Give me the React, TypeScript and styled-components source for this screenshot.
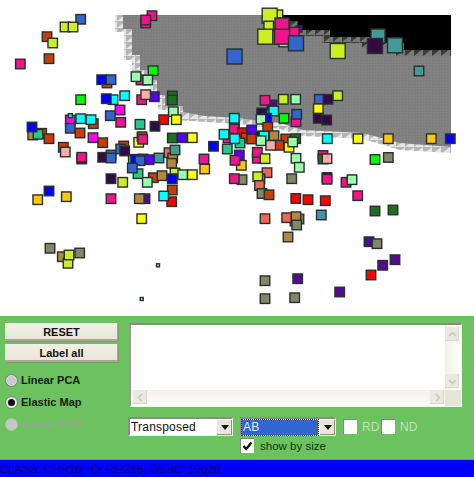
import React from "react";
import styled, { createGlobalStyle } from "styled-components";

const PINK = "#f0148c", BRICK = "#c83c0a", LIME = "#ccee22", STEEL = "#3366cc", BLUE = "#0000ff";
const CYAN = "#00ffff", GREEN = "#00ff00", YELLOW = "#ffff00", AMBER = "#ffc60a", MINT = "#99ffaa";
const JADE = "#22cc88", FOREST = "#1a7020", VIOLET = "#5500ff", PLUM = "#330a44", RED = "#ff0000";
const MAGENTA = "#ff00ee", SALMON = "#ee6655", ROSE = "#ffaaaa", TAN = "#b08840", TEAL = "#449999";
const SKY = "#4a90a8", OLIVE = "#808868", PURPLE = "#550a90";

// x, y (centre), colour, size -- in paint order
const squares: [number, number, string, number?][] = [
  [80.7, 19.3, STEEL], [65, 27, LIME], [73, 27, LIME], [47, 36.7, BRICK], [52.7, 43, LIME],
  [49, 58.7, BRICK], [20.3, 64, PINK], [152, 15.7, PINK], [145.7, 23, PINK], [145.7, 20, PINK],
  [141, 80, PINK], [136, 76.7, MINT], [153, 70.7, GREEN], [147.7, 80, MINT],
  [107, 83, BRICK], [101.7, 79.7, BLUE], [111, 79.7, STEEL], [80.7, 99.7, GREEN],
  [113, 99.7, CYAN], [106.3, 98.7, BLUE], [124.7, 95.7, CYAN], [154.3, 96.7, VIOLET], [141.7, 99.7, PINK], [145.7, 94.7, ROSE],
  [172.3, 96, FOREST], [172.3, 100, FOREST], [173.3, 111.7, MINT], [176.3, 119.7, YELLOW], [163.7, 119.7, RED],
  [155, 126.3, PLUM], [140, 124.3, JADE], [120, 110, MAGENTA], [110.3, 115.7, STEEL], [120.7, 122.3, PINK],
  [70.3, 120, MAGENTA], [70.3, 115.7, CYAN, 4], [93.3, 123.7, BRICK], [80.7, 118.7, CYAN], [91, 119.7, CYAN],
  [70.3, 128.3, STEEL], [80, 133, BRICK], [93, 137.7, MAGENTA], [102.7, 142.7, BRICK],
  [32.7, 135, TAN], [41.7, 133.3, BRICK], [38, 134.3, JADE], [32, 127, BLUE], [49, 138.7, BRICK],
  [63.3, 147.3, BRICK], [65.3, 152, ROSE], [81.7, 159, PLUM], [81.7, 157.3, PINK],
  [102.7, 157.3, PLUM], [111, 155, STEEL], [111, 158, STEEL], [123.7, 146, BRICK], [120.7, 149, STEEL], [124.7, 151, PLUM],
  [138.7, 142.3, YELLOW], [142, 136.7, BRICK], [142.7, 139.3, PINK],
  [172.3, 138, FOREST], [182.3, 137.7, VIOLET], [192.3, 137.7, YELLOW], [213.5, 146.3, BLUE],
  [204, 159, PINK], [204.7, 169, AMBER],
  [133.3, 160, JADE], [135.7, 159.3, BLUE], [143, 159, PINK], [149, 159.7, VIOLET], [140, 160.7, STEEL], [159, 158, TEAL],
  [169, 152.7, SALMON], [172.7, 158, TAN], [175, 150, TEAL], [171.7, 163.3, TAN],
  [138, 173.7, JADE], [132.3, 168, STEEL], [153.3, 177.7, BRICK], [162, 175.7, TAN], [175, 173, LIME],
  [182.7, 174.7, MINT], [192.3, 174.7, YELLOW], [172.3, 178.7, BLUE], [147.3, 182.3, MINT], [122.7, 182.3, LIME],
  [111, 178.7, PLUM], [172.3, 190, BRICK], [171.7, 201.7, RED], [163.7, 196, CYAN],
  [145, 198.7, PURPLE], [139.3, 198.7, TAN], [49, 191, BLUE], [37.7, 199.7, AMBER], [66.3, 196.7, AMBER],
  [111, 198.7, PINK], [141.7, 218.7, YELLOW],
  [50, 248.3, OLIVE], [62.3, 256.7, TAN], [79.7, 253, OLIVE], [68, 263.3, LIME], [69, 255, LIME],
  [158, 265.3, MINT, 3], [141.7, 299, MINT, 3],
  [272, 105, PURPLE], [261.7, 113, PLUM], [265, 100.3, PINK], [283.3, 99.3, LIME], [295.7, 99.3, MINT],
  [337.7, 95.7, LIME], [319.3, 99.3, STEEL], [328, 99.3, PLUM], [273.7, 111, CYAN], [266.7, 118.3, BLUE], [261, 119.3, MINT],
  [284, 118.3, GREEN], [296, 121.7, PINK], [296.7, 114.3, STEEL], [318.3, 108.7, YELLOW], [318.3, 118.3, PLUM], [326.7, 120, PLUM],
  [234.3, 126, PINK], [234.3, 129, PINK], [234.3, 118.3, CYAN], [228, 138, PINK], [224, 134.3, CYAN],
  [242.3, 132.7, RED], [267.7, 127.3, BRICK], [258, 136, PLUM], [251.7, 130, VIOLET], [246, 138, BRICK], [251.7, 139, BRICK],
  [264, 136, CYAN], [274, 135.7, TAN], [240, 143, JADE], [234.7, 138.7, CYAN], [227.3, 149, JADE], [285.7, 139, BRICK], [295.7, 138.7, FOREST],
  [279, 145.3, BRICK], [289, 147.3, YELLOW], [292.7, 142, MINT], [261, 140.7, MINT], [270.7, 145.3, ROSE],
  [327.3, 138.7, CYAN], [358, 138.7, YELLOW], [388.3, 138.7, AMBER], [431.3, 138.7, AMBER], [450.3, 138.7, BLUE],
  [239.3, 155, VIOLET], [241.3, 165.3, AMBER], [235, 160.3, PINK], [257.3, 158.3, PINK], [257.3, 152.3, PINK], [265, 158.7, LIME],
  [296, 158.3, MINT], [299.3, 167.3, MINT], [323, 155.5, PINK], [323, 159, FOREST], [327, 158.7, ROSE], [375, 159.5, GREEN], [388.3, 157.5, OLIVE],
  [267, 172.7, SALMON], [260, 179, OLIVE], [257.7, 176.7, LIME], [291.7, 178.7, OLIVE], [242, 179.7, OLIVE], [234.3, 178.7, PINK],
  [327, 177.5, PLUM], [327, 179.3, PINK], [346, 182.3, PINK], [352, 179.7, MINT], [357.7, 195.7, PINK],
  [259.5, 185.5, SALMON], [262, 193.5, OLIVE], [269, 194.8, BRICK], [295.8, 198.5, RED], [308, 199.7, RED], [325.3, 200.7, RED],
  [265, 218.7, SALMON], [295, 221, OLIVE], [299, 219, OLIVE], [286.7, 217.7, SALMON], [296, 216.7, TAN], [296.7, 225, OLIVE], [321.3, 215, SKY],
  [288, 237, TAN], [375, 211, FOREST], [393, 210, FOREST], [369, 241.7, PURPLE], [377, 243.7, OLIVE],
  [395, 259.7, PURPLE], [382.7, 265.3, PURPLE], [371, 275, RED], [265, 280.7, OLIVE], [297.7, 278.7, PURPLE],
  [339.7, 292, PURPLE], [265, 298.7, OLIVE], [294.7, 297.7, OLIVE],
  [278.7, 14, LIME, 8], [269.7, 15.7, LIME, 15], [268.7, 26, LIME], [282, 25, PINK, 14], [299, 29, PURPLE, 6], [294.3, 32, PINK],
  [283.7, 42, LIME], [265.3, 36.7, LIME, 15], [282, 36.7, PINK, 15], [296, 43.3, STEEL, 15],
  [337.7, 51, LIME, 15], [378, 36, TEAL, 14], [375, 46, PLUM, 15], [395, 45.3, TEAL, 15], [419, 71, TEAL], [234.5, 56.5, STEEL, 15],
];

const MAP_EDGE = "123,15 123,29 132,29 132,55 140,55 140,70 150,70 150,80 157,80 157,95 165,95 165,106 183,106 183,112 205,116 237,118 280,123 303,130 363,133 400,143 451,147 451,15";
const MAP_HALO = "115,15 115,32 124,32 124,60 132,60 132,76 143,76 143,86 150,86 150,100 158,100 158,110 175,110 175,120 237,124 280,129 303,136 363,139 400,150 451,153 451,15";
const DARK_EDGE = "283,15 283,21 298,21 298,30 330,30 330,37 370,37 370,43 404,43 404,50 451,50 451,15";
const DARK_HALO = "275,15 275,27 290,27 290,36 322,36 322,43 362,43 362,49 396,49 396,56 451,56 451,15";

const GlobalStyle = createGlobalStyle`
  html, body { margin: 0; padding: 0; background: #fff; }
`;

const Page = styled.div`
  width: 474px;
  height: 477px;
  display: flex;
  flex-direction: column;
  overflow: hidden;
  font-family: "Liberation Sans", Arial, sans-serif;
`;

const Plot = styled.svg`
  display: block;
  flex: 0 0 316px;
  width: 474px;
  height: 316px;
`;

const Panel = styled.div`
  flex: 1;
  background: #6cc25e;
  display: grid;
  grid-template-columns: 113px 333px;
  column-gap: 11px;
  padding: 7px 0 0 5px;
  align-items: start;
`;

const LeftColumn = styled.div`
  display: flex;
  flex-direction: column;
`;

const PushButton = styled.button`
  height: 18px;
  margin: 0 0 3px;
  padding: 0;
  border: 0;
  background: linear-gradient(#f2f0e6, #e8e5d6);
  box-shadow: inset -1px -2px 0 #a9a794, 1px 1px 0 #7f9a78;
  color: #111;
  font: bold 11px "Liberation Sans", Arial, sans-serif;
`;

const RadioGroup = styled.div`
  display: flex;
  flex-direction: column;
  gap: 8px;
  margin-top: 8px;
`;

const RadioRow = styled.div<{ $off?: boolean }>`
  display: flex;
  align-items: center;
  gap: 4px;
  height: 14px;
  margin-left: 1px;
  font-size: 11px;
  font-weight: bold;
  color: ${(p) => (p.$off ? "#93a890" : "#0c1f10")};
`;

const RadioDot = styled.span<{ $on?: boolean; $off?: boolean }>`
  width: 11px;
  height: 11px;
  border-radius: 50%;
  box-sizing: border-box;
  flex: none;
  background: ${(p) => (p.$on ? "#111" : p.$off ? "#c5c8c2" : "#c9c9cf")};
  border: ${(p) => (p.$on ? "2.5px solid #e6e6ea" : p.$off ? "0" : "1px solid #ddd")};
  box-shadow: 0 0 0 1px ${(p) => (p.$off ? "#a6c8a0" : "#7b8a7a")};
`;

const RightColumn = styled.div`
  display: flex;
  flex-direction: column;
  gap: 10px;
`;

const ListBox = styled.div`
  height: 84px;
  box-sizing: border-box;
  display: grid;
  grid-template-columns: 1fr 16px;
  grid-template-rows: 1fr 16px;
  background: #fff;
  border-top: 2px solid #8a8a86;
  border-left: 2px solid #9a9a96;
  border-right: 1px solid #f4f4ef;
  border-bottom: 1px solid #f4f4ef;
`;

const ListText = styled.div`
  background: #fff;
`;

const ScrollTrack = styled.div<{ $vertical?: boolean }>`
  display: flex;
  flex-direction: ${(p) => (p.$vertical ? "column" : "row")};
  justify-content: space-between;
  padding: ${(p) => (p.$vertical ? "2px 1px 2px 0" : "0 1px 1px 2px")};
  background: ${(p) =>
    p.$vertical ? "linear-gradient(90deg, #f2f1e9, #fdfdfa)" : "linear-gradient(#f2f1e9, #fdfdfa)"};
`;

const ScrollButton = styled.div`
  width: 14px;
  height: 14px;
  display: flex;
  align-items: center;
  justify-content: center;
  background: #eae9e0;
  box-shadow: inset -1px -1px 0 #d8d7cc;
`;

const ScrollCorner = styled.div`
  background: #e6e5d8;
`;

const Controls = styled.div`
  display: grid;
  grid-template-columns: 105px auto;
  column-gap: 7px;
  row-gap: 2px;
  margin-left: -1px;
`;

const OptionsRow = styled.div`
  display: flex;
  align-items: center;
`;

const Select = styled.div<{ $width: number }>`
  width: ${(p) => p.$width}px;
  height: 19px;
  box-sizing: border-box;
  display: flex;
  align-items: center;
  background: #fff;
  border-top: 2px solid #8d8d88;
  border-left: 2px solid #8d8d88;
  border-right: 1px solid #f0f0ea;
  border-bottom: 1px solid #f0f0ea;
`;

const ColumnSelect = styled(Select)`
  margin-right: 7px;
`;

const SelectValue = styled.div<{ $selected?: boolean }>`
  flex: 1;
  height: 15px;
  line-height: 15px;
  padding-left: 1px;
  font-size: 12px;
  letter-spacing: 0.2px;
  color: ${(p) => (p.$selected ? "#dfe8ff" : "#111")};
  background: ${(p) => (p.$selected ? "#3366cc" : "transparent")};
  outline: ${(p) => (p.$selected ? "1px dotted #1c2a50" : "none")};
`;

const SelectArrow = styled.div`
  flex: none;
  width: 15px;
  height: 15px;
  margin-left: 2px;
  display: flex;
  align-items: center;
  justify-content: center;
  background: #e8e6d8;
  box-shadow: inset -1px -1px 0 #8f8e7e;
`;

const CheckBox = styled.div`
  width: 14px;
  height: 15px;
  flex: none;
  box-sizing: border-box;
  display: flex;
  align-items: center;
  justify-content: center;
  background: #fff;
  border-top: 1px solid #7d8a78;
  border-left: 1px solid #7d8a78;
`;

const DimLabel = styled.span<{ $width: number }>`
  width: ${(p) => p.$width}px;
  margin-left: 5px;
  font-size: 12px;
  color: #c9dfc4;
`;

const ShowBySize = styled.div`
  grid-column: 2;
  display: flex;
  align-items: center;
  gap: 6px;
  font-size: 11.5px;
  color: #0d3512;
`;

const StatusBar = styled.div`
  flex: 0 0 18px;
  background: #0000ff;
  border-top: 1px solid #5f8fd8;
  box-sizing: border-box;
  padding-top: 2px;
  font-size: 11.5px;
  line-height: 14px;
  color: #000070;
  white-space: nowrap;
`;

const Chevron = ({ d }: { d: string }) => (
  <svg width="9" height="9" viewBox="0 0 9 9">
    <path d={d} fill="none" stroke="#c6c8c0" strokeWidth="1.6" />
  </svg>
);

const Arrow = () => (
  <svg width="8" height="5" viewBox="0 0 8 5">
    <path d="M0 0H8L4 5Z" fill="#111" />
  </svg>
);

const Tick = () => (
  <svg width="11" height="10" viewBox="0 0 11 10">
    <path d="M1.5 5L4.2 8L9.5 1.5" fill="none" stroke="#0a0a0a" strokeWidth="2.4" />
  </svg>
);

export default function App() {
  return (
    <Page>
      <GlobalStyle />
      <Plot viewBox="0 0 474 316">
        <defs>
          <pattern id="grain" width="3" height="3" patternUnits="userSpaceOnUse">
            <rect width="3" height="3" fill="#808080" />
            <rect width="1" height="1" fill="#7a7a7a" />
            <rect x="2" y="1" width="1" height="1" fill="#868686" />
          </pattern>
          <pattern id="lightTeeth" width="9" height="7" patternUnits="userSpaceOnUse">
            <rect width="9" height="7" fill="#e6e6e6" />
            <polygon points="0,7 9,0 0,0" fill="#b4b4b4" />
          </pattern>
          <pattern id="darkTeeth" width="9" height="7" patternUnits="userSpaceOnUse">
            <rect width="9" height="7" fill="#787878" />
            <polygon points="0,7 9,0 0,0" fill="#3a3a3a" />
          </pattern>
        </defs>
        <polygon points={MAP_HALO} fill="url(#lightTeeth)" />
        <polygon points={MAP_EDGE} fill="url(#grain)" />
        <polygon points={DARK_HALO} fill="url(#darkTeeth)" />
        <polygon points={DARK_EDGE} fill="#000" />
        {squares.map(([x, y, color, size = 9.5], i) => (
          <rect
            key={i}
            x={x - size / 2}
            y={y - size / 2}
            width={size}
            height={size}
            fill={color}
            stroke="#26302c"
            strokeWidth={1.4}
          />
        ))}
      </Plot>
      <Panel>
        <LeftColumn>
          <PushButton>RESET</PushButton>
          <PushButton>Label all</PushButton>
          <RadioGroup>
            <RadioRow>
              <RadioDot />
              Linear PCA
            </RadioRow>
            <RadioRow>
              <RadioDot $on />
              Elastic Map
            </RadioRow>
            <RadioRow $off>
              <RadioDot $off />
              Kernel PCA
            </RadioRow>
          </RadioGroup>
        </LeftColumn>
        <RightColumn>
          <ListBox>
            <ListText />
            <ScrollTrack $vertical>
              <ScrollButton>
                <Chevron d="M1 6L4.5 2.5L8 6" />
              </ScrollButton>
              <ScrollButton>
                <Chevron d="M1 3L4.5 6.5L8 3" />
              </ScrollButton>
            </ScrollTrack>
            <ScrollTrack>
              <ScrollButton>
                <Chevron d="M6 1L2.5 4.5L6 8" />
              </ScrollButton>
              <ScrollButton>
                <Chevron d="M3 1L6.5 4.5L3 8" />
              </ScrollButton>
            </ScrollTrack>
            <ScrollCorner />
          </ListBox>
          <Controls>
            <Select $width={105}>
              <SelectValue>Transposed</SelectValue>
              <SelectArrow>
                <Arrow />
              </SelectArrow>
            </Select>
            <OptionsRow>
              <ColumnSelect $width={96}>
                <SelectValue $selected>AB</SelectValue>
                <SelectArrow>
                  <Arrow />
                </SelectArrow>
              </ColumnSelect>
              <CheckBox />
              <DimLabel $width={19}>RD</DimLabel>
              <CheckBox />
              <DimLabel $width={20}>ND</DimLabel>
            </OptionsRow>
            <ShowBySize>
              <CheckBox>
                <Tick />
              </CheckBox>
              show by size
            </ShowBySize>
          </Controls>
        </RightColumn>
      </Panel>
      <StatusBar>CLASS: CHR10, ID: REG95, DESC: 10q26</StatusBar>
    </Page>
  );
}
